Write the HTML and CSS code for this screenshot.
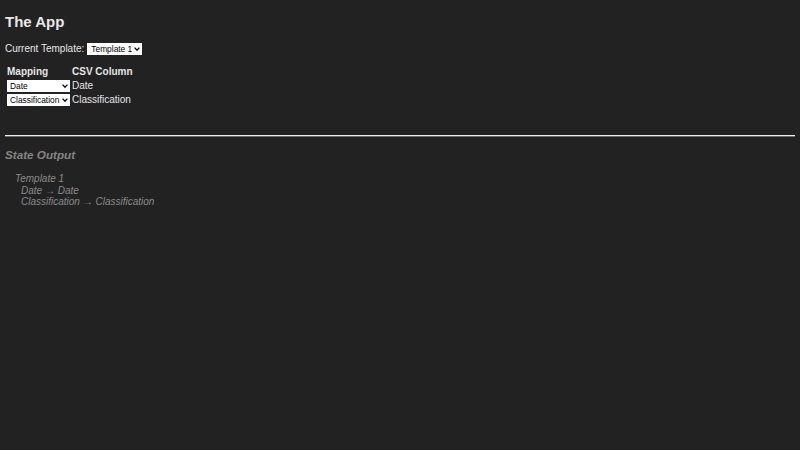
FILE: index.html
```html
<!DOCTYPE html>
<html>
<head>
<meta charset="utf-8">
<link rel="stylesheet" href="styles.css">
</head>
<body>
<div class="app">
  <h2 class="title">The App</h2>
  <div class="current"><span>Current Template:</span><span class="selwrap"><select class="tpl"><option>Template 1</option><option>Template 2</option></select><svg class="chev" viewBox="0 0 6 4" width="6" height="4"><path d="M0.6 0.6 L3 3.2 L5.4 0.6" fill="none" stroke="#000" stroke-width="1.3"/></svg></span></div>
  <table class="map">
    <thead><tr><th>Mapping</th><th>CSV Column</th></tr></thead>
    <tbody>
      <tr><td><span class="selwrap"><select class="sel"><option>Date</option><option>Classification</option></select><svg class="chev" viewBox="0 0 6 4" width="6" height="4"><path d="M0.6 0.6 L3 3.2 L5.4 0.6" fill="none" stroke="#000" stroke-width="1.3"/></svg></span></td><td>Date</td></tr>
      <tr><td><span class="selwrap"><select class="sel"><option>Date</option><option selected>Classification</option></select><svg class="chev" viewBox="0 0 6 4" width="6" height="4"><path d="M0.6 0.6 L3 3.2 L5.4 0.6" fill="none" stroke="#000" stroke-width="1.3"/></svg></span></td><td>Classification</td></tr>
    </tbody>
  </table>
  <hr class="rule">
  <h3 class="state-title">State Output</h3>
  <div class="state">
    <div class="l1">Template 1</div>
    <div class="l2">Date → Date</div>
    <div class="l2">Classification → Classification</div>
  </div>
</div>
</body>
</html>
```
FILE: styles.css
```css
html, body { margin: 0; padding: 0; background: #222222; }
body { font-family: "Liberation Sans", Arial, sans-serif; font-size: 10px; color: #e6e6e6; }
.app { padding: 5px; }
.title { font-size: 15px; line-height: 17px; font-weight: bold; margin: 8px 0 0 0; color: #e8e8e8; }
.current { display: flex; align-items: center; gap: 3px; height: 13px; margin-top: 12px; line-height: 12px; }
.selwrap { position: relative; display: block; }
.chev { position: absolute; right: 2px; top: 4px; pointer-events: none; }
.tpl, .sel { -webkit-appearance: none; appearance: none; font-family: "Liberation Sans", Arial, sans-serif; font-size: 8.4px; line-height: 12px; background: #fff; color: #000; border: none; border-radius: 0; padding: 0 0 0 3px; margin: 0; display: block; outline: none; }
.tpl { height: 12px; width: 55px; padding-left: 4px; }
.sel { height: 12px; width: 63px; }
.map { margin-top: 9px; border-spacing: 2px; line-height: 12px; }
.map th { text-align: left; padding: 0; height: 12px; }
.map td { padding: 0; height: 12px; }
.rule { border: none; border-top: 1px solid #eeeeee; border-bottom: 1px solid #6a6a6a; margin: 27px 0 0 0; height: 0; }
.state-title { font-style: italic; color: #858585; font-size: 11.7px; line-height: 13.5px; margin: 11px 0 0 0; }
.state { font-style: italic; color: #8a8a8a; margin-top: 11.5px; padding-left: 10px; line-height: 11.5px; }
.l2 { padding-left: 6px; }
```
